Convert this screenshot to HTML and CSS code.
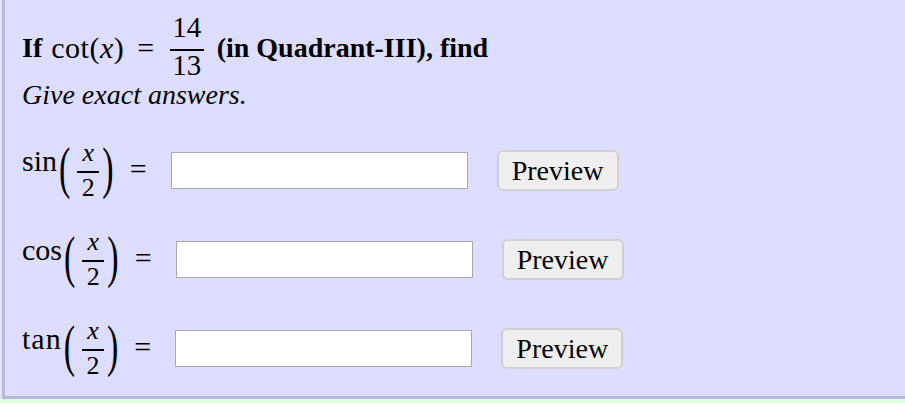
FILE: index.html
```html
<!DOCTYPE html>
<html lang="en">
<head>
    <meta charset="UTF-8">
    <title>Half-angle problem</title>
    <link rel="stylesheet" href="styles.css">
</head>
<body>

<div class="problem">
    <div class="prompt">
        <b class="lead">If</b>
        <span class="head-math">cot(<i>x</i>)</span>
        <span class="head-math eq">=</span>
        <span class="frac big"><span class="num">14</span><span class="den">13</span></span>
        <b class="tail">(in Quadrant-III), find</b>
    </div>
    <div class="hint"><i>Give exact answers.</i></div>

    <div class="row">
        <span class="fn">sin</span>
        <span class="paren open">(</span>
        <span class="frac half"><i class="num">x</i><span class="den">2</span></span>
        <span class="paren close">)</span>
        <span class="eq">=</span>
        <input type="text" class="answer">
        <button class="preview">Preview</button>
    </div>
    <div class="row">
        <span class="fn">cos</span>
        <span class="paren open">(</span>
        <span class="frac half"><i class="num">x</i><span class="den">2</span></span>
        <span class="paren close">)</span>
        <span class="eq">=</span>
        <input type="text" class="answer">
        <button class="preview">Preview</button>
    </div>
    <div class="row">
        <span class="fn tan">tan</span>
        <span class="paren open">(</span>
        <span class="frac half"><i class="num">x</i><span class="den">2</span></span>
        <span class="paren close">)</span>
        <span class="eq">=</span>
        <input type="text" class="answer">
        <button class="preview">Preview</button>
    </div>
</div>
<div class="next"></div>

</body>
</html>
```

FILE: styles.css
```css
body {
    margin: 0;
    padding: 0;
    background-color: #e6e6ff;
    font-family: 'Liberation Serif', 'DejaVu Serif', serif;
    color: #000;
}
.problem {
    margin-left: 2px;
    background-color: #ddddff;
    border-left: 3px solid #b9b9dc;
    border-bottom: 3px solid #b9b9dc;
    padding: 13px 0 0 17px;
    height: 383px;
}
.next {
    background-color: #ddffdd;
    height: 10px;
}

/* question line */
.prompt {
    display: flex;
    align-items: center;
    height: 66px;
    white-space: nowrap;
}
.prompt b {
    font-size: 28px;
    line-height: 32px;
    margin-top: 3px;
}
.lead {
    margin-right: 9px;
}
.head-math {
    font-size: 30px;
    line-height: 32px;
    margin-top: 3px;
    letter-spacing: 0.5px;
}
.head-math.eq {
    margin: 3px 15px 0 13px;
}
.tail {
    margin-left: 13px;
}

/* stacked fractions */
.frac {
    display: inline-flex;
    flex-direction: column;
    align-items: center;
}
.frac .num {
    align-self: stretch;
    text-align: center;
    border-bottom: 2px solid #000;
}
.frac.big {
    font-size: 29px;
    width: 34px;
}
.frac.big .num {
    line-height: 28px;
    padding-bottom: 8px;
}
.frac.big .den {
    line-height: 28px;
}
.frac.half {
    font-size: 26px;
    width: 22px;
    margin: 0 3px 0 7px;
}
.frac.half .num {
    line-height: 22px;
    padding-bottom: 7px;
}
.frac.half .den {
    line-height: 22px;
    padding-top: 4px;
}

.hint {
    font-size: 28px;
    line-height: 32px;
}

/* answer rows */
.row {
    display: flex;
    align-items: center;
    height: 89px;
    white-space: nowrap;
}
.hint + .row {
    margin-top: 15px;
}
.fn {
    font-size: 30px;
    line-height: 30px;
    margin-bottom: 20px;
}
.fn.tan {
    letter-spacing: 1px;
}
.paren {
    display: inline-block;
    font-size: 34px;
    line-height: 34px;
    transform: scaleY(1.7);
    margin-bottom: 5px;
}
.paren.open {
    margin-left: 2px;
}
.eq {
    font-size: 30px;
    line-height: 30px;
    margin: 0 0 3px 16px;
}
.answer {
    width: 297px;
    height: 37px;
    box-sizing: border-box;
    border: 1px solid #a9a9a9;
    background: #fff;
    margin-left: 24px;
}
.preview {
    margin-left: 29px;
    width: 122px;
    height: 41px;
    padding: 0 13px;
    font-family: 'Liberation Serif', 'DejaVu Serif', serif;
    font-size: 28px;
    color: #000;
    background-color: #efefef;
    border: 2px solid #d0d0d0;
    border-radius: 6px;
}
```
